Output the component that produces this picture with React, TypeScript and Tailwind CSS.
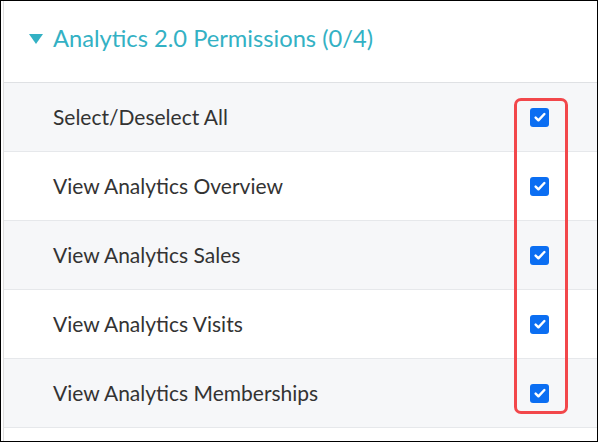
import React from 'react';

const rows = [
  'Select/Deselect All',
  'View Analytics Overview',
  'View Analytics Sales',
  'View Analytics Visits',
  'View Analytics Memberships',
];

function CheckBox() {
  return (
    <span className="w-[19px] h-[19px] rounded-[3px] bg-[#0b6ef2] flex items-center justify-center">
      <svg width="14" height="14" viewBox="0 0 16 16" fill="none">
        <path d="M3 8.6l3.2 3.2L13 4.6" stroke="#fff" strokeWidth="2.8" strokeLinecap="round" strokeLinejoin="round" />
      </svg>
    </span>
  );
}

export default function App() {
  return (
    <div className="w-[598px] h-[442px] border border-black bg-white overflow-hidden relative font-['Lato','Liberation_Sans',sans-serif]">
      <div className="ml-[2px] h-full border-l border-[#dedede]">
        {/* Header */}
        <div className="h-[82px] border-b border-[#dfe1e4] flex items-center pl-[25px] pb-[6px] gap-[10px]">
          <svg width="14" height="10" viewBox="0 0 14 10">
            <path d="M0 0h14L7 10z" fill="#33b1c4" />
          </svg>
          <span className="text-[23.7px] leading-none text-[#33b1c4]">Analytics 2.0 Permissions (0/4)</span>
        </div>

        {/* Permission rows */}
        {rows.map((label, i) => (
          <div
            key={label}
            className={`h-[69px] border-b border-[#e6e8eb] flex items-center justify-between pl-[49px] pr-[48px] ${
              i % 2 === 0 ? 'bg-[#f6f7f9]' : 'bg-white'
            }`}
          >
            <span className="text-[21px] text-[#333]">{label}</span>
            <CheckBox />
          </div>
        ))}
      </div>

      {/* highlight */}
      <div className="absolute left-[513px] top-[97px] w-[54px] h-[316px] border-[3px] border-[#f2474b] rounded-[7px] pointer-events-none" />
    </div>
  );
}
